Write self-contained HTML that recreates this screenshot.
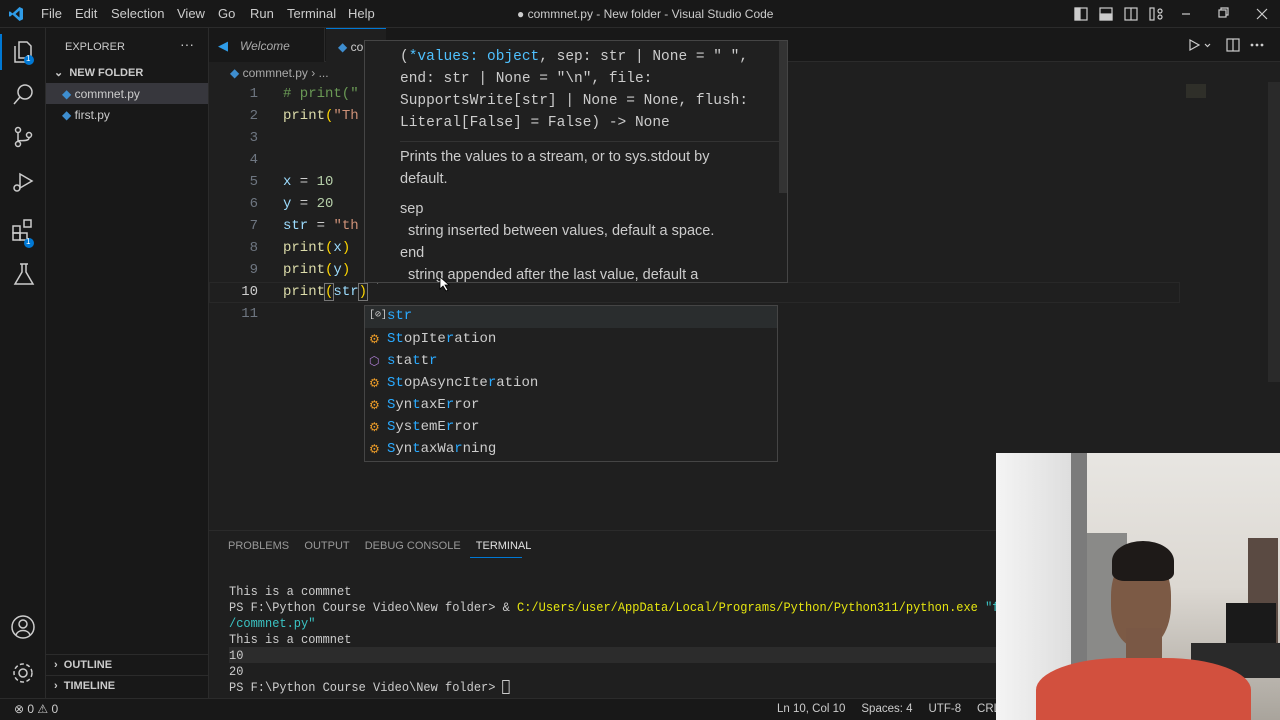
<!DOCTYPE html>
<html><head><meta charset="utf-8"><style>
*{margin:0;padding:0;box-sizing:border-box}
body{width:1280px;height:720px;overflow:hidden;background:#1f1f1f;font-family:"Liberation Sans",sans-serif;color:#ccc;position:relative}
.abs{position:absolute}
.mono{font-family:"Liberation Mono",monospace}
#title{left:0;top:0;width:1280px;height:28px;background:#181818;border-bottom:1px solid #2b2b2b}
#title .m{position:absolute;top:6px;font-size:13px;color:#ccc}
#act{left:0;top:28px;width:46px;height:670px;background:#181818;border-right:1px solid #2b2b2b}
#side{left:46px;top:28px;width:163px;height:670px;background:#181818;border-right:1px solid #2b2b2b}
.ln{position:absolute;width:50px;text-align:right;left:208px;font-size:14px;color:#6e7681}
.code{position:absolute;left:283px;font-size:14px;white-space:pre;color:#ccc;font-family:"Liberation Mono",monospace}
.kw{color:#dcdcaa}.v{color:#9cdcfe}.s{color:#ce9178}.n{color:#b5cea8}.c{color:#6a9955}.p{color:#ffd700}
#hover{left:364px;top:40px;width:424px;height:243px;background:#202020;border:1px solid #454545}
#sug{left:364px;top:305px;width:414px;height:157px;background:#202020;border:1px solid #454545}
.si{position:absolute;left:22px;font-size:14px;color:#ccc;white-space:pre}
.si b{color:#2aaaff;font-weight:normal}
.ico{position:absolute;left:4px;width:14px;height:14px;font-size:12px;color:#ee9d28}
.term{position:absolute;left:229px;font-size:13px;white-space:pre;color:#ccc;font-family:"Liberation Mono",monospace;transform:scaleX(.923);transform-origin:left}
#status{left:0;top:698px;width:1280px;height:22px;background:#181818;border-top:1px solid #2b2b2b;font-size:12px}
</style></head><body>
<div id="title" class="abs">
<svg class="abs" style="left:8px;top:6px" width="16" height="16" viewBox="0 0 16 16"><path d="M11.5 1 L15 2.7 V13.3 L11.5 15 L4.5 8.6 L1.8 10.7 L1 10 V6 L1.8 5.3 L4.5 7.4 Z M11.5 4.5 L7.5 8 L11.5 11.5 Z" fill="#2f9ce8"/></svg>
<span class="m" style="left:41px">File</span><span class="m" style="left:75px">Edit</span><span class="m" style="left:111px">Selection</span><span class="m" style="left:177px">View</span><span class="m" style="left:218px">Go</span><span class="m" style="left:250px">Run</span><span class="m" style="left:287px">Terminal</span><span class="m" style="left:348px">Help</span>
<span class="m" style="left:517px;font-size:12px;top:7px">● commnet.py - New folder - Visual Studio Code</span>
<svg class="abs" style="left:1074px;top:7px" width="200" height="14" fill="none" stroke="#ccc" stroke-width="1.2"><rect x="1" y="1" width="12" height="12"/><rect x="1" y="1" width="5" height="12" fill="#ccc"/><rect x="26" y="1" width="12" height="12"/><rect x="26" y="7" width="12" height="6" fill="#ccc"/><rect x="51" y="1" width="12" height="12"/><line x1="57" y1="1" x2="57" y2="13"/><rect x="76" y="1" width="4" height="12"/><circle cx="86" cy="4" r="2"/><circle cx="86" cy="10" r="2"/><line x1="108" y1="7" x2="116" y2="7"/><rect x="145" y="3" width="7" height="7"/><path d="M147 3 V1 H154 V8 H152"/><path d="M183 2 L193 12 M193 2 L183 12"/></svg>
</div>
<div id="act" class="abs">
<div class="abs" style="left:0;top:6px;width:2px;height:36px;background:#0078d4"></div>
<svg class="abs" style="left:10px;top:10px" width="28" height="280" fill="none" stroke="#ccc" stroke-width="1.5">
<path d="M9 4 H17 L21 8 V20 H9 Z M5 8 V24 H16"/><circle cx="19" cy="22" r="5" fill="#0078d4" stroke="none"/>
<circle cx="15" cy="54" r="7"/><line x1="10" y1="59" x2="4" y2="66"/>
<circle cx="8" cy="92" r="2.5"/><circle cx="8" cy="106" r="2.5"/><circle cx="19" cy="97" r="2.5"/><path d="M8 95 V103 M19 100 C19 104 8 102 8 103"/>
<path d="M10 136 L22 143 L10 150 Z"/><circle cx="7" cy="150" r="3"/>
<rect x="3" y="188" width="7" height="7"/><rect x="3" y="195" width="7" height="7"/><rect x="10" y="195" width="7" height="7"/><rect x="14" y="182" width="7" height="7"/><circle cx="19" cy="205" r="5" fill="#0078d4" stroke="none"/>
<path d="M10 226 H18 M12 226 V234 L5 246 H23 L16 234 V226"/>
</svg>
<div class="abs" style="left:26px;top:26px;font-size:8px;color:#fff">1</div>
<div class="abs" style="left:26px;top:209px;font-size:8px;color:#fff">1</div>
<svg class="abs" style="left:10px;top:586px" width="28" height="80" fill="none" stroke="#ccc" stroke-width="1.5"><circle cx="13" cy="13" r="11"/><circle cx="13" cy="10" r="4"/><path d="M6 21 C8 15 18 15 20 21"/><circle cx="13" cy="59" r="4"/><circle cx="13" cy="59" r="9" stroke-dasharray="4 2.5"/></svg>
</div>
<div id="side" class="abs">
<div class="abs" style="left:19px;top:13px;font-size:11px">EXPLORER</div>
<div class="abs" style="left:134px;top:8px;font-size:14px">···</div>
<div class="abs" style="left:8px;top:38px;font-size:11px;font-weight:bold">⌄ &nbsp;NEW FOLDER</div>
<div class="abs" style="left:0;top:55px;width:162px;height:21px;background:#37373d"></div>
<div class="abs" style="left:16px;top:59px;font-size:12px"><span style="color:#3e8ed0">◆</span> commnet.py</div>
<div class="abs" style="left:16px;top:80px;font-size:12px"><span style="color:#3e8ed0">◆</span> first.py</div>
<div class="abs" style="left:0;top:626px;width:162px;height:1px;background:#2b2b2b"></div>
<div class="abs" style="left:8px;top:631px;font-size:11px;font-weight:bold">›&nbsp; OUTLINE</div>
<div class="abs" style="left:0;top:647px;width:162px;height:1px;background:#2b2b2b"></div>
<div class="abs" style="left:8px;top:652px;font-size:11px;font-weight:bold">›&nbsp; TIMELINE</div>
</div>
<!-- tabs -->
<div class="abs" style="left:209px;top:28px;width:1071px;height:34px;background:#181818;border-bottom:1px solid #2b2b2b"></div>
<div class="abs" style="left:209px;top:28px;width:116px;height:34px;background:#181818;border-right:1px solid #2b2b2b;font-size:12px;font-style:italic;padding:11px 0 0 31px;color:#aaa">Welcome</div>
<div class="abs" style="left:218px;top:38px;color:#2f9ce8;font-size:13px">◀</div>
<div class="abs" style="left:326px;top:28px;width:60px;height:35px;background:#1f1f1f;border-top:1px solid #0078d4;font-size:12px;padding:11px 0 0 12px"><span style="color:#3e8ed0">◆</span> co</div>
<svg class="abs" style="left:1188px;top:38px" width="80" height="14" fill="none" stroke="#ccc" stroke-width="1.2"><path d="M2 2 L11 7 L2 12 Z"/><path d="M17 6 L19.5 8.5 L22 6"/><rect x="39" y="1" width="12" height="12"/><line x1="45" y1="1" x2="45" y2="13"/><circle cx="64" cy="7" r=".8" fill="#ccc"/><circle cx="69" cy="7" r=".8" fill="#ccc"/><circle cx="74" cy="7" r=".8" fill="#ccc"/></svg>
<div class="abs" style="left:230px;top:66px;font-size:12px;color:#aaa"><span style="color:#3e8ed0">◆</span> commnet.py › ...</div>
<!-- code -->
<div class="ln mono" style="top:86px">1</div><div class="code" style="top:86px"><span class="c"># print("</span></div>
<div class="ln mono" style="top:108px">2</div><div class="code" style="top:108px"><span class="kw">print</span><span class="p">(</span><span class="s">"Th</span></div>
<div class="ln mono" style="top:130px">3</div>
<div class="ln mono" style="top:152px">4</div>
<div class="ln mono" style="top:174px">5</div><div class="code" style="top:174px"><span class="v">x</span> = <span class="n">10</span></div>
<div class="ln mono" style="top:196px">6</div><div class="code" style="top:196px"><span class="v">y</span> = <span class="n">20</span></div>
<div class="ln mono" style="top:218px">7</div><div class="code" style="top:218px"><span class="v">str</span> = <span class="s">"th</span></div>
<div class="ln mono" style="top:240px">8</div><div class="code" style="top:240px"><span class="kw">print</span><span class="p">(</span><span class="v">x</span><span class="p">)</span></div>
<div class="ln mono" style="top:262px">9</div><div class="code" style="top:262px"><span class="kw">print</span><span class="p">(</span><span class="v">y</span><span class="p">)</span></div>
<div class="abs" style="left:209px;top:282px;width:971px;height:21px;border:1px solid #282828"></div>
<div class="ln mono" style="top:284px;color:#ccc">10</div><div class="code" style="top:284px"><span class="kw">print</span><span class="p" style="outline:1px solid #777">(</span><span class="v">str</span><span class="p" style="outline:1px solid #777">)</span></div>
<div class="ln mono" style="top:306px">11</div>
<div class="abs mono" style="left:366px;top:244px;font-size:13px;color:#ccc;line-height:10px">&nbsp;^<br><br>1/2<br>&nbsp;⌄</div>
<div class="abs" style="left:1186px;top:84px;width:20px;height:14px;background:#3a3a30;opacity:.6"></div>
<div class="abs" style="left:1268px;top:82px;width:12px;height:300px;background:#2a2a2a"></div>
<!-- hover -->
<div id="hover" class="abs">
<div class="abs mono" style="left:35px;top:5px;font-size:14.5px;line-height:22px;white-space:pre;color:#ccc">(<span style="color:#4fc1ff">*values: object</span>, sep: str | None = " ",
end: str | None = "\n", file:
SupportsWrite[str] | None = None, flush:
Literal[False] = False) -&gt; None</div>
<div class="abs" style="left:35px;top:100px;width:386px;height:1px;background:#333"></div>
<div class="abs" style="left:35px;top:105px;font-size:14.5px;line-height:22px;color:#ccc;white-space:pre">Prints the values to a stream, or to sys.stdout by
default.</div>
<div class="abs" style="left:35px;top:157px;font-size:14.5px;line-height:22px;color:#ccc;white-space:pre">sep
  string inserted between values, default a space.
end
  string appended after the last value, default a</div>
<div class="abs" style="left:414px;top:0;width:8px;height:152px;background:#333"></div>
</div>
<svg class="abs" style="left:439px;top:276px" width="12" height="16"><path d="M1 1 V13 L4 10 L7 15 L9 14 L6 9 H10 Z" fill="#fff" stroke="#000" stroke-width=".8"/></svg>
<!-- suggest -->
<div id="sug" class="abs">
<div class="abs" style="left:0;top:0;width:412px;height:22px;background:#2a2d2e"></div>
<div class="ico mono" style="top:3px;color:#ccc;font-size:10px">[⊘]</div><div class="si mono" style="top:2px"><b>str</b></div>
<div class="ico" style="top:26px">⚙</div><div class="si mono" style="top:25px"><b>St</b>opIte<b>r</b>ation</div>
<div class="ico" style="top:48px;color:#b180d7">⬡</div><div class="si mono" style="top:47px"><b>s</b>ta<b>t</b>t<b>r</b></div>
<div class="ico" style="top:70px">⚙</div><div class="si mono" style="top:69px"><b>St</b>opAsyncIte<b>r</b>ation</div>
<div class="ico" style="top:92px">⚙</div><div class="si mono" style="top:91px"><b>S</b>yn<b>t</b>axE<b>r</b>ror</div>
<div class="ico" style="top:114px">⚙</div><div class="si mono" style="top:113px"><b>S</b>ys<b>t</b>emE<b>r</b>ror</div>
<div class="ico" style="top:136px">⚙</div><div class="si mono" style="top:135px"><b>S</b>yn<b>t</b>axWa<b>r</b>ning</div>
</div>
<!-- panel -->
<div class="abs" style="left:209px;top:530px;width:1071px;height:1px;background:#2b2b2b"></div>
<div class="abs" style="left:228px;top:540px;font-size:11px;color:#999;white-space:pre">PROBLEMS     OUTPUT     DEBUG CONSOLE     <span style="color:#e0e0e0">TERMINAL</span></div>
<div class="abs" style="left:470px;top:557px;width:52px;height:1px;background:#0078d4"></div>
<div class="abs" style="left:229px;top:647px;width:770px;height:16px;background:#2c2c2c"></div>
<div class="term" style="top:584px">This is a commnet</div>
<div class="term" style="top:600px">PS F:\Python Course Video\New folder&gt; &amp; <span style="color:#e5e510">C:/Users/user/AppData/Local/Programs/Python/Python311/python.exe</span> <span style="color:#3bc4c4">"f</span></div>
<div class="term" style="top:616px;color:#3bc4c4">/commnet.py"</div>
<div class="term" style="top:632px">This is a commnet</div>
<div class="term" style="top:648px">10</div>
<div class="term" style="top:664px">20</div>
<div class="term" style="top:680px">PS F:\Python Course Video\New folder&gt; <span style="display:inline-block;width:8px;height:14px;border:1px solid #ccc;vertical-align:-3px"></span></div>
<div id="status" class="abs">
<div class="abs" style="left:14px;top:3px;color:#ccc">⊗ 0 ⚠ 0</div>
<div class="abs" style="left:777px;top:4px;color:#ccc;white-space:pre;font-size:11.5px">Ln 10, Col 10     Spaces: 4     UTF-8     CRLF</div>
</div>
<!-- webcam -->
<div class="abs" style="left:996px;top:453px;width:284px;height:267px;overflow:hidden;background:linear-gradient(180deg,#e8e6e2 0%,#dcd8d2 50%,#a9a49c 100%)">
<div class="abs" style="left:0;top:0;width:75px;height:267px;background:linear-gradient(90deg,#f4f4f4,#dedede)"></div>
<div class="abs" style="left:75px;top:0;width:16px;height:267px;background:#7b7b7b"></div>
<div class="abs" style="left:91px;top:80px;width:40px;height:187px;background:#8a8a88"></div>
<div class="abs" style="left:252px;top:85px;width:30px;height:120px;background:#5a4a42"></div>
<div class="abs" style="left:230px;top:150px;width:50px;height:40px;background:#1a1a1a"></div>
<div class="abs" style="left:195px;top:190px;width:89px;height:35px;background:#2a2a2a"></div>
<div class="abs" style="left:115px;top:100px;width:60px;height:95px;border-radius:45%;background:#7c5a45"></div>
<div class="abs" style="left:116px;top:88px;width:62px;height:40px;border-radius:50% 50% 20% 20%;background:#1e1a18"></div>
<div class="abs" style="left:130px;top:175px;width:36px;height:40px;background:#7a5845"></div>
<div class="abs" style="left:40px;top:205px;width:215px;height:80px;border-radius:40% 40% 0 0;background:#d2503e"></div>
</div>
</body></html>
